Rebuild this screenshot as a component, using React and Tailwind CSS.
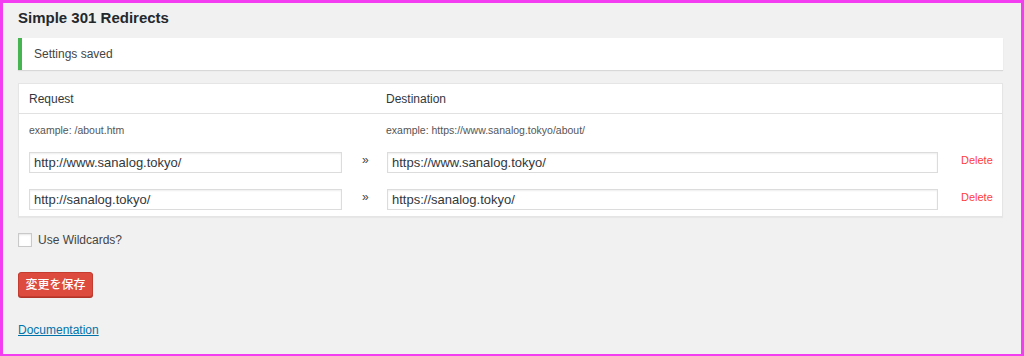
import React from "react";

const rows = [
  { from: "http://www.sanalog.tokyo/", to: "https://www.sanalog.tokyo/" },
  { from: "http://sanalog.tokyo/", to: "https://sanalog.tokyo/" },
];

function UrlInput({ value, width }) {
  return (
    <input
      type="text"
      defaultValue={value}
      className={`${width} h-[21px] border border-[#dcdcdc] bg-white px-[4px] text-[13px] text-[#32373c] shadow-[inset_0_1px_2px_rgba(0,0,0,0.07)] outline-none`}
    />
  );
}

export default function App() {
  return (
    <div
      className="w-[1024px] h-[356px] overflow-hidden bg-[#f1f1f1] border-t-[3px] border-l-[3px] border-r-[3px] border-b-[2px] border-[#f23ef0] text-[#23282d]"
      style={{ fontFamily: '"Liberation Sans", Arial, "Noto Sans CJK JP", sans-serif' }}
    >
      <div className="pl-[15px] pr-[18px]">
        <h1 className="pt-[5px] h-[35px] text-[15px] leading-[20px] font-bold text-[#23282d]">
          Simple 301 Redirects
        </h1>

        {/* notice */}
        <div className="h-[32px] flex items-center bg-white border-l-4 border-[#46b450] shadow-[0_1px_1px_rgba(0,0,0,0.1)] pl-[12px] text-[12px] text-[#444]">
          Settings saved
        </div>

        {/* redirects table */}
        <div className="mt-[13px] h-[134px] bg-white border border-[#e5e5e5] shadow-[0_1px_1px_rgba(0,0,0,0.04)]">
          <div className="h-[30px] flex items-center border-b border-[#e1e1e1] pl-[10px] text-[12px] text-[#32373c]">
            <div className="w-[357px]">Request</div>
            <div>Destination</div>
          </div>
          <div className="h-[30px] pt-[4px] flex items-center pl-[10px] text-[10.5px] text-[#555]">
            <div className="w-[357px]">example: /about.htm</div>
            <div>example: https://www.sanalog.tokyo/about/</div>
          </div>
          <div className="flex flex-col gap-[16px] pl-[10px] pt-[8px]">
            {rows.map((r) => (
              <div key={r.from} className="flex items-center h-[21px]">
                <UrlInput value={r.from} width="w-[313px]" />
                <div className="w-[45px] pl-[20px] text-[12px] text-[#444] -mt-[5px]">»</div>
                <UrlInput value={r.to} width="w-[551px]" />
                <a className="ml-[23px] -mt-[5px] text-[11px] text-[#ff3c3c]">Delete</a>
              </div>
            ))}
          </div>
        </div>

        {/* wildcard */}
        <label className="mt-[14px] flex items-center gap-[6px] text-[12px] text-[#444]">
          <span className="w-[14px] h-[14px] border border-[#c9c9c9] bg-white shadow-[inset_0_1px_2px_rgba(0,0,0,0.1)]" />
          Use Wildcards?
        </label>

        <button className="mt-[23px] h-[25px] w-[75px] rounded-[3px] bg-[#dc4b3e] border border-[#c43c30] text-white text-[12px] font-medium shadow-[0_1px_0_#b23328]">
          変更を保存
        </button>

        <div className="mt-[20px]">
          <a className="text-[12px] text-[#0073aa] underline">Documentation</a>
        </div>
      </div>
    </div>
  );
}
